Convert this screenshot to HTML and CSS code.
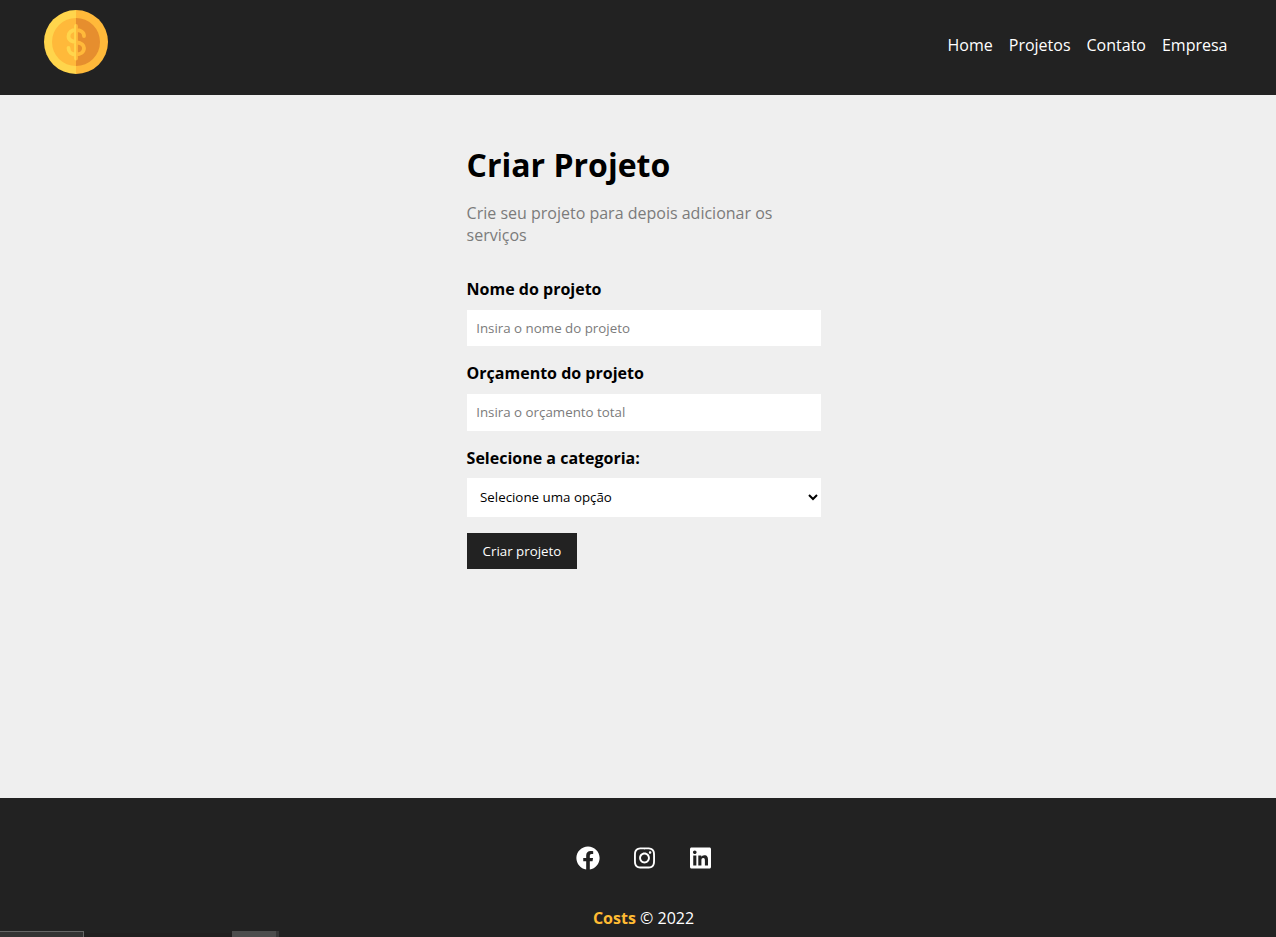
FILE: index.html
```html
<!DOCTYPE html>
<html lang="pt-BR">
<head>
<meta charset="utf-8">
<title>Costs</title>
<link rel="stylesheet" href="styles.css">
</head>
<body>
<div class="page">
  <header class="navbar">
    <a class="logo" href="#" aria-label="Costs">
      <svg viewBox="0 0 64 64" width="64" height="64">
        <defs>
          <clipPath id="coin-left"><rect x="0" y="0" width="32" height="64"/></clipPath>
          <clipPath id="coin-right"><rect x="32" y="0" width="32" height="64"/></clipPath>
        </defs>
        <path d="M32 0a32 32 0 0 0 0 64z" fill="#ffd54c"/>
        <path d="M32 0a32 32 0 0 1 0 64z" fill="#ffb93a"/>
        <path d="M32 8a24 24 0 0 0 0 48z" fill="#ffb93a"/>
        <path d="M32 8a24 24 0 0 1 0 48z" fill="#e68e2e"/>
        <g fill="none" stroke-width="3.800" stroke-linecap="round">
          <path clip-path="url(#coin-left)" d="M40 26C40 22 36.500 20 32 20S24.500 22.500 24.500 26.500C24.500 30.500 28 31.300 32 32S40 33.800 40 38C40 42 36.500 44.500 32 44.500S24.500 42 24.500 38M32 16V48.500" stroke="#ffd54c"/>
          <path clip-path="url(#coin-right)" d="M40 26C40 22 36.500 20 32 20S24.500 22.500 24.500 26.500C24.500 30.500 28 31.300 32 32S40 33.800 40 38C40 42 36.500 44.500 32 44.500S24.500 42 24.500 38M32 16V48.500" stroke="#ffb93a"/>
        </g>
      </svg>
    </a>
    <nav>
      <ul class="nav-list">
        <li><a href="#">Home</a></li>
        <li><a href="#">Projetos</a></li>
        <li><a href="#">Contato</a></li>
        <li><a href="#">Empresa</a></li>
      </ul>
    </nav>
  </header>

  <main class="content">
    <section class="newproject">
      <h1>Criar Projeto</h1>
      <p class="lead">Crie seu projeto para depois adicionar os serviços</p>
      <form class="form">
        <div class="field">
          <label for="name">Nome do projeto</label>
          <input id="name" type="text" placeholder="Insira o nome do projeto">
        </div>
        <div class="field">
          <label for="budget">Orçamento do projeto</label>
          <input id="budget" type="number" placeholder="Insira o orçamento total">
        </div>
        <div class="field">
          <label for="category">Selecione a categoria:</label>
          <select id="category">
            <option>Selecione uma opção</option>
          </select>
        </div>
        <button class="btn" type="button">Criar projeto</button>
      </form>
    </section>
  </main>

  <footer class="footer">
    <ul class="social">
      <li><svg viewBox="0 0 512 512" width="24" height="24"><path d="M504 256C504 119 393 8 256 8S8 119 8 256c0 123.780 90.690 226.380 209.250 245V327.690h-63V256h63v-54.640c0-62.150 37-96.480 93.670-96.480 27.140 0 55.520 4.840 55.520 4.840v61h-31.280c-30.800 0-40.410 19.120-40.410 38.730V256h68.780l-11 71.690h-57.780V501C413.310 482.380 504 379.780 504 256z"/></svg></li>
      <li><svg viewBox="0 0 448 512" width="21" height="24"><path d="M224.100 141c-63.600 0-114.900 51.300-114.900 114.900s51.300 114.900 114.900 114.900S339 319.500 339 255.900 287.700 141 224.100 141zm0 189.600c-41.100 0-74.700-33.500-74.700-74.700s33.500-74.700 74.700-74.700 74.700 33.500 74.700 74.700-33.600 74.700-74.700 74.700zm146.400-194.300c0 14.900-12 26.800-26.800 26.800-14.900 0-26.800-12-26.800-26.800s12-26.800 26.800-26.800 26.800 12 26.800 26.800zm76.100 27.200c-1.700-35.900-9.900-67.700-36.200-93.900-26.200-26.200-58-34.400-93.900-36.200-37-2.100-147.900-2.100-184.900 0-35.800 1.700-67.600 9.900-93.900 36.100s-34.400 58-36.200 93.900c-2.100 37-2.100 147.900 0 184.900 1.700 35.900 9.900 67.700 36.200 93.900s58 34.400 93.900 36.200c37 2.100 147.900 2.100 184.900 0 35.900-1.700 67.700-9.900 93.900-36.200 26.200-26.200 34.400-58 36.200-93.900 2.100-37 2.100-147.800 0-184.800zM398.800 388c-7.800 19.600-22.900 34.700-42.600 42.600-29.500 11.700-99.500 9-132.100 9s-102.700 2.600-132.100-9c-19.600-7.800-34.700-22.900-42.600-42.600-11.700-29.500-9-99.500-9-132.100s-2.600-102.700 9-132.100c7.800-19.600 22.900-34.700 42.600-42.600 29.500-11.700 99.500-9 132.100-9s102.700-2.600 132.100 9c19.600 7.800 34.700 22.900 42.600 42.600 11.700 29.500 9 99.500 9 132.100s2.700 102.700-9 132.100z"/></svg></li>
      <li class="social-last"><svg viewBox="0 0 448 512" width="21" height="24"><path d="M416 32H31.900C14.300 32 0 46.500 0 64.300v383.400C0 465.500 14.300 480 31.900 480H416c17.600 0 32-14.500 32-32.300V64.300c0-17.800-14.400-32.300-32-32.300zM135.400 416H69V202.200h66.500V416zm-33.200-243c-21.300 0-38.500-17.300-38.500-38.500S80.900 96 102.200 96c21.200 0 38.500 17.300 38.500 38.500 0 21.300-17.200 38.500-38.500 38.500zm282.100 243h-66.400V312c0-24.800-.5-56.700-34.500-56.700-34.600 0-39.900 27-39.900 54.900V416h-66.400V202.200h63.700v29.200h.9c8.900-16.800 30.600-34.500 62.900-34.500 67.200 0 79.700 44.300 79.700 101.900V416z"/></svg></li>
    </ul>
    <p class="copy"><span class="brand">Costs</span> &copy; 2022</p>
    <div class="edge-tab edge-tab-a"></div>
    <div class="edge-tab edge-tab-strip"></div>
    <div class="edge-tab edge-tab-b"></div>
  </footer>
</div>
</body>
</html>
```

FILE: styles.css
```css
* {
  box-sizing: border-box;
  margin: 0;
  padding: 0;
}

html,
body {
  height: 100%;
  overflow: hidden;
}

body {
  font-family: "Open Sans", "Noto Sans", sans-serif;
  background: #efefef;
  color: #000;
}

.page {
  display: flex;
  flex-direction: column;
  height: 937px;
}

.navbar {
  height: 95px;
  flex: none;
  display: flex;
  justify-content: space-between;
  align-items: flex-start;
  padding: 10px 48.500px 0 44px;
  background: #222;
}

.logo {
  display: block;
  height: 64px;
}

.nav-list {
  display: flex;
  gap: 16px;
  list-style: none;
  margin-top: 24px;
}

.nav-list a {
  color: #fff;
  font-size: 16px;
  line-height: 22px;
  text-decoration: none;
}

.content {
  flex: 1;
  display: flex;
  justify-content: center;
  padding: 48px 0 0 11.200px;
}

.newproject {
  width: 354px;
}

h1 {
  font-size: 32px;
  line-height: 44px;
  font-weight: 700;
  margin-bottom: 15px;
}

.lead {
  font-size: 16px;
  line-height: 22px;
  color: #7b7b7b;
  margin-bottom: 32.200px;
}

.field {
  display: flex;
  flex-direction: column;
  margin-bottom: 16px;
}

.field label {
  font-size: 16px;
  line-height: 22px;
  font-weight: 700;
  margin-bottom: 9.400px;
}

.field input {
  height: 36.800px;
  padding: 0 9.600px;
  border: none;
  background: #fff;
  font-family: inherit;
  font-size: 13.333px;
}

.field input::placeholder {
  color: #7b7b7b;
}

.field select {
  height: 39px;
  padding: 0 9.400px;
  border: none;
  background: #fff;
  color: #000;
  font-family: inherit;
  font-size: 13.333px;
}

.btn {
  display: block;
  height: 36px;
  padding: 0 16px;
  border: none;
  background: #222;
  color: #fff;
  font-family: inherit;
  font-size: 13.333px;
}

.footer {
  position: relative;
  height: 139px;
  flex: none;
  padding-top: 48px;
  background: #222;
  color: #fff;
  text-align: center;
}

.social {
  display: flex;
  justify-content: center;
  align-items: center;
  gap: 33.500px;
  height: 24px;
  list-style: none;
  margin-left: 11px;
}

.social li {
  display: flex;
}

.social .social-last {
  margin-left: 1.500px;
}

.social svg {
  fill: #fff;
}

.copy {
  margin: 32px 0 0 11px;
  font-size: 16px;
  line-height: 32px;
}

.brand {
  color: #ffbb33;
  font-weight: 700;
}

.edge-tab {
  position: absolute;
  bottom: 0;
  height: 6px;
}

.edge-tab-a {
  left: 0;
  width: 84px;
  background: #333;
  border: 1px solid #666;
  border-bottom: none;
  border-left: none;
}

.edge-tab-strip {
  left: 84px;
  width: 148px;
  height: 4px;
  background: #211f1f;
}

.edge-tab-b {
  left: 232px;
  width: 47px;
  background: #4d4d4d;
  border-right: 3px solid #383838;
}
```
